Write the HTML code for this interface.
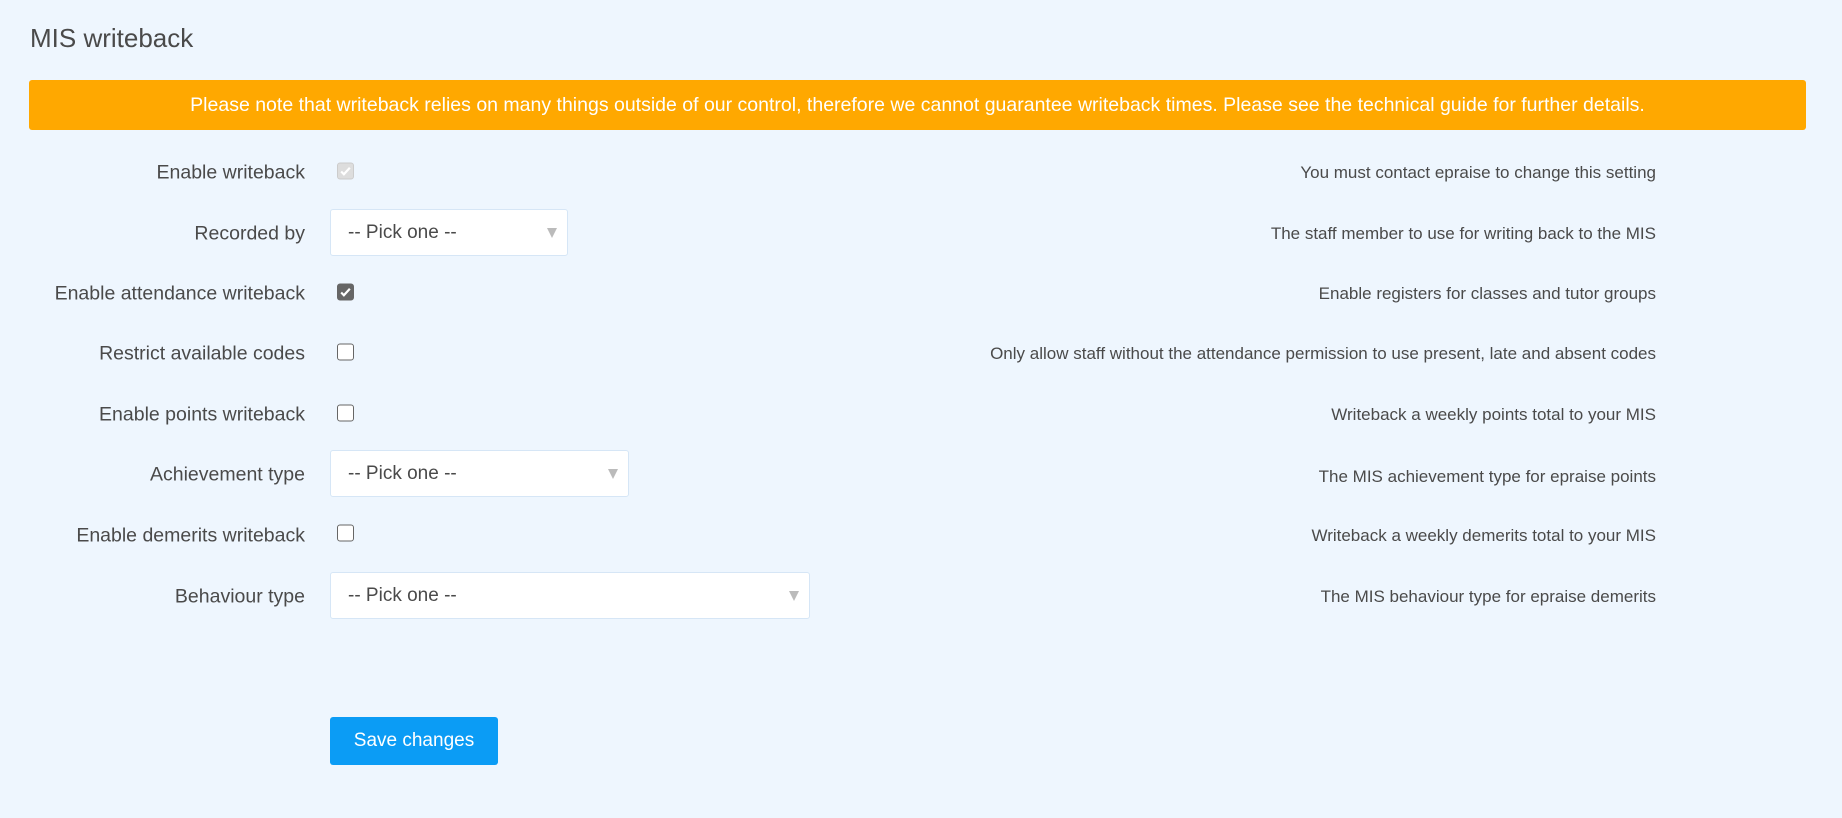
<!DOCTYPE html>
<html><head><style>
body{margin:0;width:1842px;height:818px;background:#eef6fe;font-family:"Liberation Sans",sans-serif;color:#4a4a4a;position:relative;overflow:hidden}
.a{position:absolute}
h1{position:absolute;left:30px;top:23px;margin:0;font-weight:normal;font-size:26px;color:#4a4a4a}
.ban{left:29px;top:80px;width:1777px;height:50px;background:#ffa800;border-radius:3px;color:#fff;font-size:19.5px;line-height:50px;text-align:center;white-space:nowrap}
.lab{position:absolute;right:1537px;font-size:19.5px;color:#4a4a4a;transform:translateY(-50%);white-space:nowrap}
.desc{position:absolute;right:186px;font-size:17px;color:#4a4a4a;transform:translateY(-50%);white-space:nowrap}
.cb{position:absolute;left:337px;width:15px;height:15px;border:1.5px solid #666;border-radius:3px;background:#fff;transform:translateY(-50%)}
.cb.on{background:#666;border-color:#666}
.cb.dis{background:#ddd;border-color:#ccc}
.cb svg{position:absolute;left:1px;top:1px}
.sel{position:absolute;left:330px;height:47px;background:#fff;border:1px solid #d6e6f6;border-radius:3px;box-sizing:border-box;font-size:19px;line-height:45px;padding-left:17px;color:#4a4a4a}
.sel:after{content:"";position:absolute;right:10px;top:18px;border-left:5px solid transparent;border-right:5px solid transparent;border-top:10px solid #bbb}
.btn{left:330px;top:717px;width:168px;height:48px;background:#0b9cf5;border-radius:3px;color:#fff;font-size:19px;line-height:48px;text-align:center}
</style></head><body>
<h1>MIS writeback</h1>
<div class="a ban">Please note that writeback relies on many things outside of our control, therefore we cannot guarantee writeback times. Please see the technical guide for further details.</div>

<div class="lab" style="top:173px">Enable writeback</div>
<div class="cb dis" style="top:171px"><svg width="13" height="13" viewBox="0 0 12 12"><path d="M2 6.5l2.5 2.5L10 3" stroke="#fff" stroke-width="2" fill="none"/></svg></div>
<div class="desc" style="top:173px">You must contact epraise to change this setting</div>

<div class="lab" style="top:234px">Recorded by</div>
<div class="sel" style="top:209px;width:238px">-- Pick one --</div>
<div class="desc" style="top:234px">The staff member to use for writing back to the MIS</div>

<div class="lab" style="top:294px">Enable attendance writeback</div>
<div class="cb on" style="top:292px"><svg width="13" height="13" viewBox="0 0 12 12"><path d="M2 6.5l2.5 2.5L10 3" stroke="#fff" stroke-width="2" fill="none"/></svg></div>
<div class="desc" style="top:294px">Enable registers for classes and tutor groups</div>

<div class="lab" style="top:354px">Restrict available codes</div>
<div class="cb" style="top:352px"></div>
<div class="desc" style="top:354px">Only allow staff without the attendance permission to use present, late and absent codes</div>

<div class="lab" style="top:415px">Enable points writeback</div>
<div class="cb" style="top:413px"></div>
<div class="desc" style="top:415px">Writeback a weekly points total to your MIS</div>

<div class="lab" style="top:475px">Achievement type</div>
<div class="sel" style="top:450px;width:299px">-- Pick one --</div>
<div class="desc" style="top:477px">The MIS achievement type for epraise points</div>

<div class="lab" style="top:536px">Enable demerits writeback</div>
<div class="cb" style="top:533px"></div>
<div class="desc" style="top:536px">Writeback a weekly demerits total to your MIS</div>

<div class="lab" style="top:597px">Behaviour type</div>
<div class="sel" style="top:572px;width:480px">-- Pick one --</div>
<div class="desc" style="top:597px">The MIS behaviour type for epraise demerits</div>

<div class="a btn">Save changes</div>
</body></html>
